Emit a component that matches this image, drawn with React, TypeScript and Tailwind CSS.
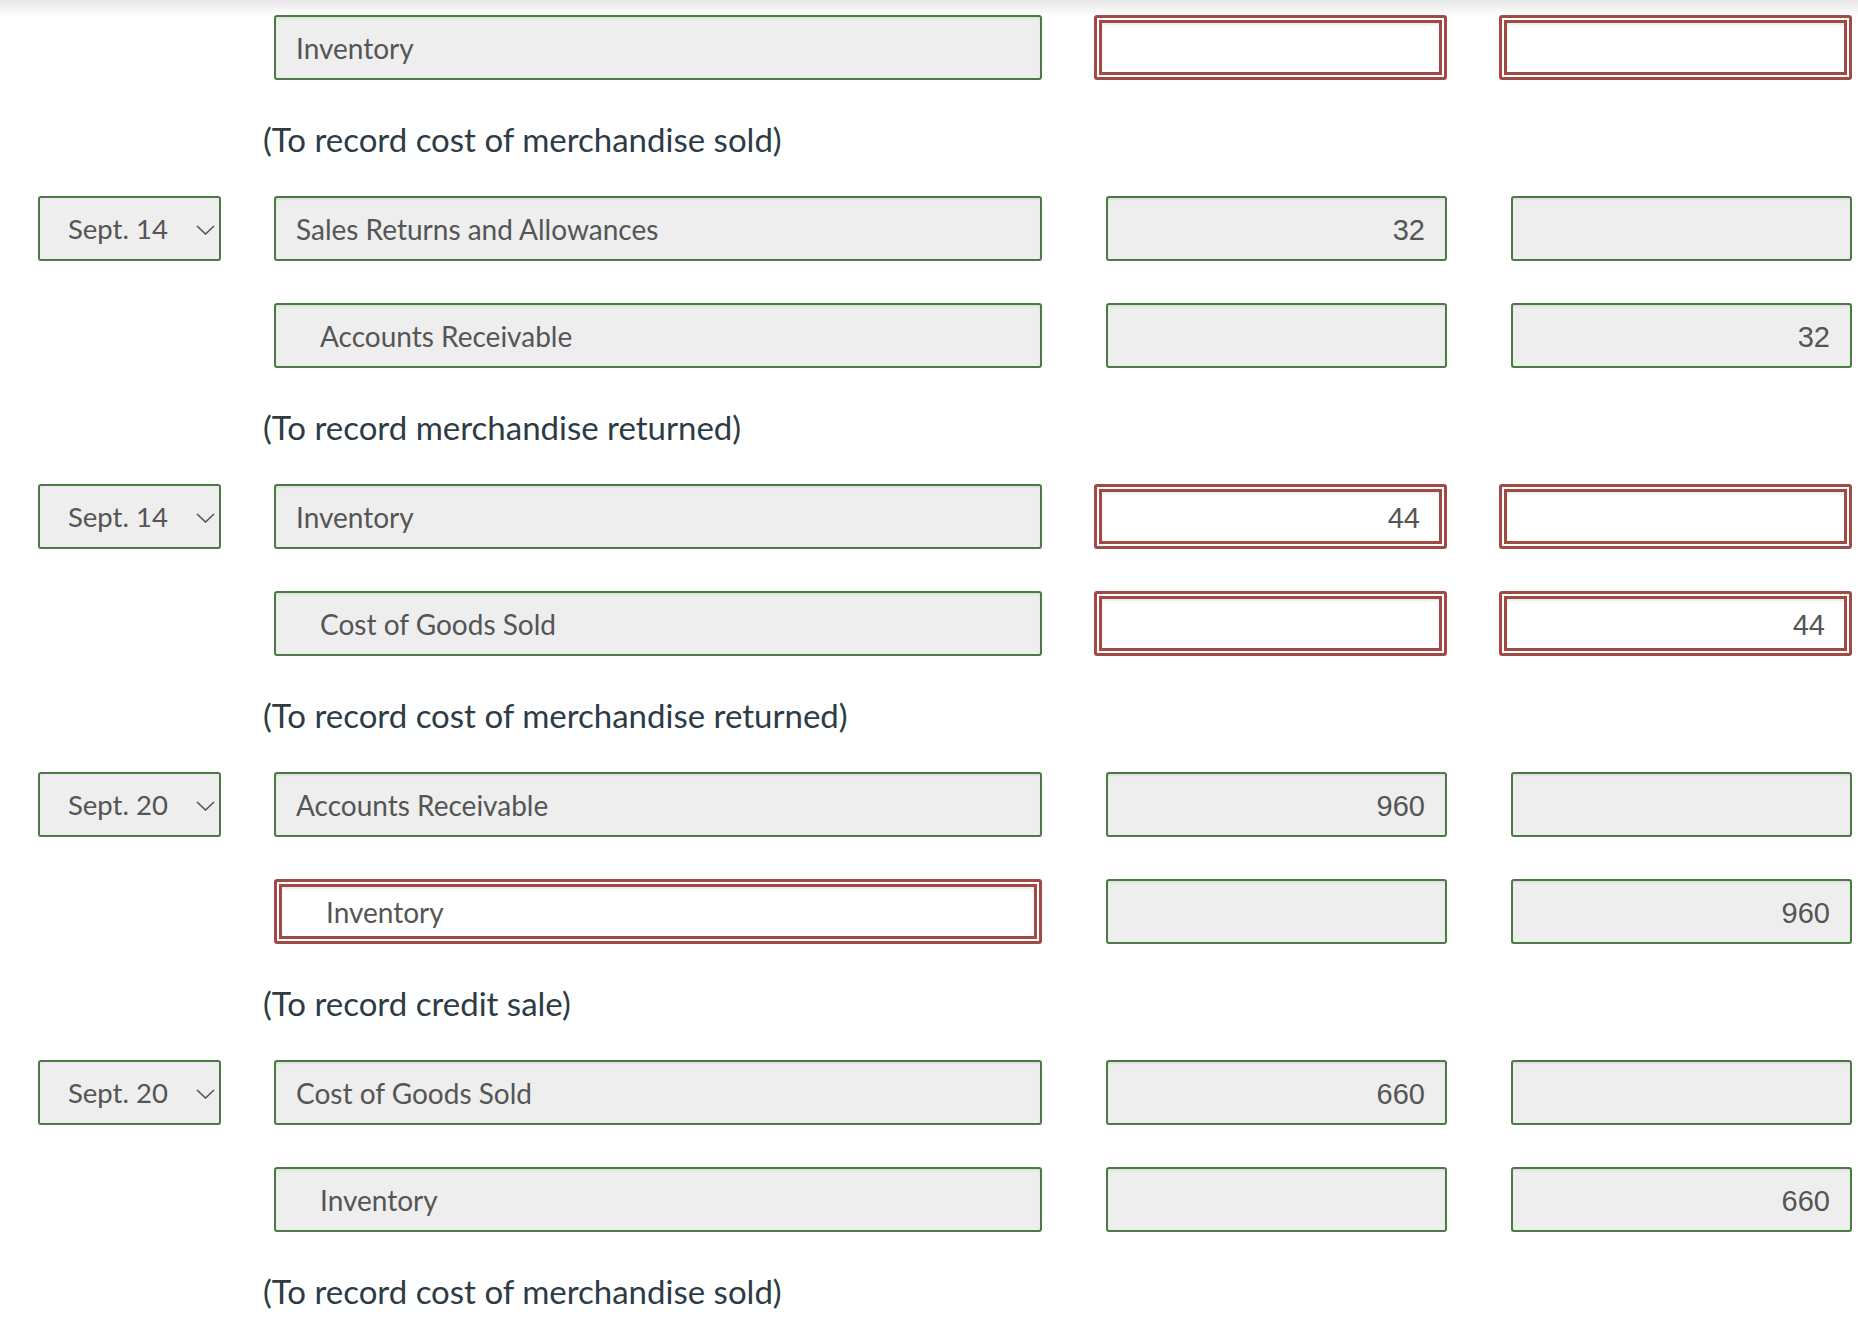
/**
 * Journal entry grid: date select, account field, debit and credit fields.
 */

interface Line {
  account: string;
  indent?: boolean;
  accountErr?: boolean;
  debit?: string;
  debitErr?: boolean;
  credit?: string;
  creditErr?: boolean;
}

interface Entry {
  date?: string;
  lines: Line[];
  note: string;
}

const entries: Entry[] = [
  {
    lines: [{ account: "Inventory", debitErr: true, creditErr: true }],
    note: "(To record cost of merchandise sold)",
  },
  {
    date: "Sept. 14",
    lines: [
      { account: "Sales Returns and Allowances", debit: "32" },
      { account: "Accounts Receivable", indent: true, credit: "32" },
    ],
    note: "(To record merchandise returned)",
  },
  {
    date: "Sept. 14",
    lines: [
      { account: "Inventory", debit: "44", debitErr: true, creditErr: true },
      { account: "Cost of Goods Sold", indent: true, debitErr: true, credit: "44", creditErr: true },
    ],
    note: "(To record cost of merchandise returned)",
  },
  {
    date: "Sept. 20",
    lines: [
      { account: "Accounts Receivable", debit: "960" },
      { account: "Inventory", indent: true, accountErr: true, credit: "960" },
    ],
    note: "(To record credit sale)",
  },
  {
    date: "Sept. 20",
    lines: [
      { account: "Cost of Goods Sold", debit: "660" },
      { account: "Inventory", indent: true, credit: "660" },
    ],
    note: "(To record cost of merchandise sold)",
  },
];

const lato = "font-['Lato','Noto_Sans',sans-serif]";

// Field shell: green when correct, double red border when marked wrong
function Field({
  error,
  className,
  children,
}: {
  error?: boolean;
  className: string;
  children?: React.ReactNode;
}) {
  if (error) {
    return (
      <div className={`${className} h-[65px] rounded-[3px] border-[3px] border-[#a14a45] bg-white p-[2px]`}>
        <div className="flex h-full items-center border-[3px] border-[#a14a45] bg-white shadow-[inset_0_2px_2px_rgba(0,0,0,0.08)]">
          {children}
        </div>
      </div>
    );
  }
  return (
    <div
      className={`${className} flex h-[65px] items-center rounded-[3px] border-2 border-[#4b7a44] bg-[#eeeeee] shadow-[inset_0_2px_2px_rgba(0,0,0,0.06)]`}
    >
      {children}
    </div>
  );
}

function Amount({ value, error }: { value?: string; error?: boolean }) {
  return (
    <div className="flex w-[405px] justify-end">
      <Field error={error} className={error ? "w-[353px]" : "w-[341px]"}>
        <span
          className={`mt-[4px] w-full text-right font-['Liberation_Sans',Arial,sans-serif] text-[29px] text-[#555555] ${
            error ? "pr-[19px]" : "pr-[20px]"
          }`}
        >
          {value}
        </span>
      </Field>
    </div>
  );
}

function DateSelect({ value }: { value: string }) {
  return (
    <div className="flex h-[65px] w-[183px] items-center justify-between rounded-[3px] border-2 border-[#4b7a44] bg-[#eeeeee] pl-[28px] pr-[4px]">
      <span className={`${lato} text-[27.5px] text-[#555555]`}>{value}</span>
      <svg width="19" height="10" viewBox="0 0 19 10" fill="none" className="mt-[2px]">
        <polyline points="1,1 9.5,9 18,1" stroke="#555555" strokeWidth="1.6" />
      </svg>
    </div>
  );
}

function Row({ date, line }: { date?: string; line: Line }) {
  return (
    <div className="flex h-[65px] items-center pl-[38px]">
      <div className="w-[236px]">{date && <DateSelect value={date} />}</div>
      <Field error={line.accountErr} className="w-[768px]">
        <span className={`${lato} text-[28px] text-[#555555] ${line.indent ? "pl-[44px]" : "pl-[20px]"}`}>
          {line.account}
        </span>
      </Field>
      <Amount value={line.debit} error={line.debitErr} />
      <Amount value={line.credit} error={line.creditErr} />
    </div>
  );
}

export default function App() {
  return (
    <div className="relative min-h-screen bg-white pt-[15px]">
      {/* header shadow */}
      <div className="absolute left-0 right-0 top-0 h-[16px] bg-gradient-to-b from-[#e6e6e6] to-white/0" />
      {entries.map((entry, i) => (
        <div key={i}>
          <div className="flex flex-col gap-[42px]">
            {entry.lines.map((line, j) => (
              <Row key={j} date={j === 0 ? entry.date : undefined} line={line} />
            ))}
          </div>
          <div className="flex h-[116px] items-center pl-[263px] pt-[4px]">
            <span className={`${lato} text-[33px] leading-[1.2] text-[#2d3b45]`}>{entry.note}</span>
          </div>
        </div>
      ))}
    </div>
  );
}
